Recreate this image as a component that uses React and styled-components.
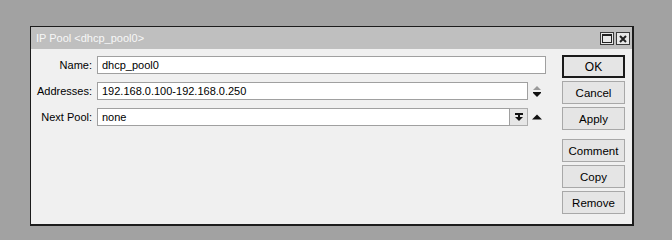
import styled, { createGlobalStyle } from 'styled-components';

const GlobalStyle = createGlobalStyle`
  body {
    margin: 0;
    background: #a2a2a2;
    font-family: "Liberation Sans", Arial, sans-serif;
    font-size: 11px;
  }
`;

const Screen = styled.div`
  padding: 26px 0 0 30px;
  height: 240px;
  box-sizing: border-box;
`;

const Window = styled.div`
  width: 604px;
  height: 200px;
  box-sizing: border-box;
  border: 1px solid #1c1c1c;
  border-right-width: 2px;
  border-bottom-width: 2px;
  background: #f0f0f0;
  display: flex;
  flex-direction: column;
`;

const TitleBar = styled.div`
  height: 22px;
  flex: none;
  background: #bfbfbf;
  display: flex;
  align-items: center;
  justify-content: space-between;
  padding: 0 2px 0 5px;
`;

const Title = styled.div`
  color: #f7f7f7;
  font-size: 11px;
`;

const TitleButtons = styled.div`
  display: flex;
  gap: 2px;
  margin-top: 1px;
`;

const TitleButton = styled.div`
  width: 14px;
  height: 13px;
  box-sizing: border-box;
  border: 1px solid #3a3a3a;
  background: #e8e8e8;
  display: flex;
  align-items: center;
  justify-content: center;
`;

const Body = styled.div`
  flex: 1;
  display: flex;
  gap: 16px;
  padding: 6px 7px 0 6px;
`;

const Form = styled.div`
  flex: 1;
  display: flex;
  flex-direction: column;
  gap: 8px;
  margin-top: 1px;
`;

const Row = styled.div`
  display: flex;
  align-items: center;
  height: 18px;
  gap: 5px;
`;

const Label = styled.div`
  width: 55px;
  flex: none;
  text-align: right;
  color: #000;
`;

const Field = styled.div`
  flex: 1;
  display: flex;
  align-items: center;
  height: 18px;
`;

const Input = styled.div`
  flex: 1;
  height: 18px;
  box-sizing: border-box;
  border: 1px solid #a0a0a0;
  background: #fff;
  padding: 0 4px;
  display: flex;
  align-items: center;
  color: #000;
`;

const Slot = styled.div`
  width: 18px;
  height: 18px;
  flex: none;
  display: flex;
  align-items: center;
  justify-content: center;
`;

const DropButton = styled(Slot)`
  box-sizing: border-box;
  border: 1px solid #adadad;
  border-left: none;
  background: #e6e6e6;
`;

const Buttons = styled.div`
  width: 63px;
  display: flex;
  flex-direction: column;
  gap: 3px;
`;

const Group = styled.div`
  display: flex;
  flex-direction: column;
  gap: 3px;
  margin-bottom: ${({ last }) => (last ? '0' : '6px')};
`;

const Button = styled.div`
  height: 23px;
  box-sizing: border-box;
  border: ${({ primary }) => (primary ? '2px solid #1a1a1a' : '1px solid #a8a8a8')};
  background: #e5e5e5;
  display: flex;
  align-items: center;
  justify-content: center;
  color: #000;
  font-size: ${({ primary }) => (primary ? '12px' : '11.5px')};
`;

const MaxIcon = () => (
  <svg width="10" height="9" viewBox="0 0 10 9">
    <rect x="0.5" y="0.5" width="9" height="8" fill="none" stroke="#222" />
    <rect x="0" y="0" width="10" height="2" fill="#222" />
  </svg>
);

const CloseIcon = () => (
  <svg width="8" height="8" viewBox="0 0 8 8">
    <path d="M1 1L7 7M7 1L1 7" stroke="#222" strokeWidth="2" />
  </svg>
);

const SpinIcon = () => (
  <svg width="10" height="13" viewBox="0 0 10 13">
    <polygon points="1,5 5,1 9,5" fill="#9a9a9a" />
    <rect x="1" y="7" width="8" height="1" fill="#111" />
    <polygon points="1,8 9,8 5,12" fill="#111" />
  </svg>
);

const DropIcon = () => (
  <svg width="8" height="9" viewBox="0 0 8 9">
    <rect x="0" y="0" width="8" height="2" fill="#111" />
    <rect x="3" y="2" width="2" height="3" fill="#111" />
    <polygon points="0,4 8,4 4,8" fill="#111" />
  </svg>
);

const UpIcon = () => (
  <svg width="10" height="6" viewBox="0 0 10 6">
    <polygon points="0,5.5 5,0.5 10,5.5" fill="#111" />
  </svg>
);

const App = () => (
  <Screen>
    <GlobalStyle />
    <Window>
      <TitleBar>
        <Title>IP Pool &lt;dhcp_pool0&gt;</Title>
        <TitleButtons>
          <TitleButton><MaxIcon /></TitleButton>
          <TitleButton><CloseIcon /></TitleButton>
        </TitleButtons>
      </TitleBar>
      <Body>
        <Form>
          <Row>
            <Label>Name:</Label>
            <Field>
              <Input>dhcp_pool0</Input>
            </Field>
          </Row>
          <Row>
            <Label>Addresses:</Label>
            <Field>
              <Input>192.168.0.100-192.168.0.250</Input>
              <Slot><SpinIcon /></Slot>
            </Field>
          </Row>
          <Row>
            <Label>Next Pool:</Label>
            <Field>
              <Input>none</Input>
              <DropButton><DropIcon /></DropButton>
              <Slot><UpIcon /></Slot>
            </Field>
          </Row>
        </Form>
        <Buttons>
          <Group>
            <Button primary>OK</Button>
            <Button>Cancel</Button>
            <Button>Apply</Button>
          </Group>
          <Group last>
            <Button>Comment</Button>
            <Button>Copy</Button>
            <Button>Remove</Button>
          </Group>
        </Buttons>
      </Body>
    </Window>
  </Screen>
);

export default App;
